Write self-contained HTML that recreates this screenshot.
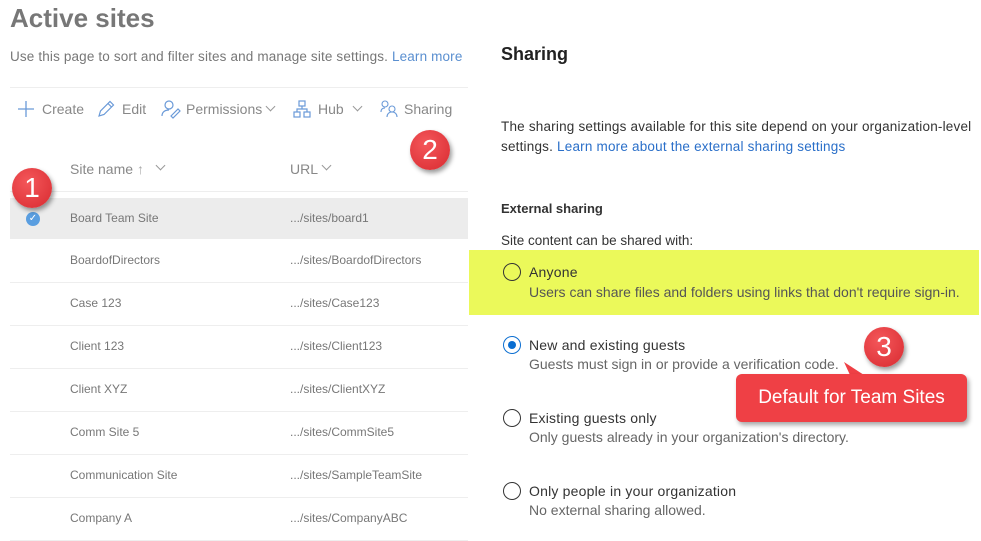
<!DOCTYPE html>
<html><head><meta charset="utf-8"><style>
body{margin:0;width:981px;height:522px;overflow:hidden;background:#fff;font-family:"Liberation Sans",sans-serif;position:relative;color:#333}
.a{position:absolute;white-space:nowrap}
.row{position:absolute;left:10px;width:458px;height:42px;border-bottom:1px solid #eee;font-size:12px;color:#777}
.row span{position:absolute;top:13px}
.badge{position:absolute;width:40px;height:40px;border-radius:50%;color:#fff;font-size:28px;text-align:center;line-height:40px;box-shadow:2px 3px 5px rgba(0,0,0,.4);background:radial-gradient(circle at 40% 35%,#f4575a,#d82a30)}
.radio{position:absolute;width:18px;height:18px;border:1.5px solid #333;border-radius:50%;box-sizing:border-box}
.t1{font-size:14px;color:#333;letter-spacing:.2px}.t2{font-size:14px;color:#666}
.tb{position:absolute;top:101px;font-size:14px;color:#888}
.chev{position:absolute;width:6px;height:6px;border-right:1px solid #999;border-bottom:1px solid #999;transform:rotate(45deg)}
</style></head><body>
<div class="a" style="left:10px;top:3px;font-size:26px;font-weight:bold;color:#777">Active sites</div>
<div class="a" style="left:10px;top:49px;font-size:13.5px;color:#777;letter-spacing:.15px">Use this page to sort and filter sites and manage site settings. <span style="color:#5a8fd0">Learn more</span></div>
<div class="a" style="left:10px;top:87px;width:458px;border-top:1px solid #eee"></div>
<svg class="a" style="left:17px;top:100px" width="18" height="18"><path d="M9 1v16M1 9h16" stroke="#6a9ad8" stroke-width="1.3"/></svg>
<div class="tb" style="left:42px">Create</div>
<svg class="a" style="left:97px;top:100px" width="18" height="18"><path d="M2 16l1.5-5L13 1.5l3.5 3.5L7 14.5z M11 3.5l3.5 3.5" fill="none" stroke="#6a9ad8" stroke-width="1.2"/></svg>
<div class="tb" style="left:122px">Edit</div>
<svg class="a" style="left:161px;top:99px" width="20" height="20"><circle cx="8" cy="6" r="4" fill="none" stroke="#6a9ad8" stroke-width="1.2"/><path d="M1 17c0-4 3-6 7-6M10 17l7-7 2 2-7 7z" fill="none" stroke="#6a9ad8" stroke-width="1.2"/></svg>
<div class="tb" style="left:186px">Permissions</div>
<div class="chev" style="left:267px;top:103px"></div>
<svg class="a" style="left:293px;top:100px" width="18" height="18"><rect x="6" y="1" width="6" height="5" fill="none" stroke="#6a9ad8" stroke-width="1.2"/><rect x="1" y="12" width="6" height="5" fill="none" stroke="#6a9ad8" stroke-width="1.2"/><rect x="11" y="12" width="6" height="5" fill="none" stroke="#6a9ad8" stroke-width="1.2"/><path d="M9 6v3M4 12V9h10v3" fill="none" stroke="#6a9ad8" stroke-width="1.2"/></svg>
<div class="tb" style="left:318px">Hub</div>
<div class="chev" style="left:354px;top:103px"></div>
<svg class="a" style="left:380px;top:100px" width="18" height="18"><circle cx="5" cy="4" r="3" fill="none" stroke="#6a9ad8" stroke-width="1.1"/><circle cx="12" cy="9" r="3" fill="none" stroke="#6a9ad8" stroke-width="1.1"/><path d="M1 12c0-3 2-4 4-4M7 17c0-3 2-5 5-5s5 2 5 5" fill="none" stroke="#6a9ad8" stroke-width="1.1"/></svg>
<div class="tb" style="left:404px">Sharing</div>
<div class="a" style="left:70px;top:161px;font-size:14px;color:#888">Site name <span style="color:#aaa">↑</span></div>
<div class="chev" style="left:157px;top:162px"></div>
<div class="a" style="left:290px;top:161px;font-size:14px;color:#888">URL</div>
<div class="chev" style="left:323px;top:162px"></div>
<div class="a" style="left:10px;top:191px;width:458px;border-top:1px solid #eee"></div>
<div class="row" style="top:198px;background:#ececec;border:none;height:41px"><span style="left:60px">Board Team Site</span><span style="left:280px">.../sites/board1</span>
<div style="position:absolute;left:16px;top:14px;width:14px;height:14px;border-radius:50%;background:#5a9ee0;color:#fff;font-size:10px;text-align:center;line-height:14px">✓</div></div>
<div class="row" style="top:240px"><span style="left:60px">BoardofDirectors</span><span style="left:280px">.../sites/BoardofDirectors</span></div>
<div class="row" style="top:283px"><span style="left:60px">Case 123</span><span style="left:280px">.../sites/Case123</span></div>
<div class="row" style="top:326px"><span style="left:60px">Client 123</span><span style="left:280px">.../sites/Client123</span></div>
<div class="row" style="top:369px"><span style="left:60px">Client XYZ</span><span style="left:280px">.../sites/ClientXYZ</span></div>
<div class="row" style="top:412px"><span style="left:60px">Comm Site 5</span><span style="left:280px">.../sites/CommSite5</span></div>
<div class="row" style="top:455px"><span style="left:60px">Communication Site</span><span style="left:280px">.../sites/SampleTeamSite</span></div>
<div class="row" style="top:498px"><span style="left:60px">Company A</span><span style="left:280px">.../sites/CompanyABC</span></div>
<div class="badge" style="left:12px;top:168px">1</div>
<div class="badge" style="left:410px;top:130px">2</div>

<div class="a" style="left:501px;top:44px;font-size:18px;font-weight:bold;color:#222">Sharing</div>
<div class="a" style="left:501px;top:117px;font-size:13.5px;color:#333;line-height:20px;letter-spacing:.2px">The sharing settings available for this site depend on your organization-level<br>settings. <span style="color:#2a6fc9">Learn more about the external sharing settings</span></div>
<div class="a" style="left:501px;top:201px;font-size:13px;font-weight:bold;color:#333">External sharing</div>
<div class="a" style="left:501px;top:233px;font-size:13.5px;color:#333">Site content can be shared with:</div>
<div class="a" style="left:469px;top:250px;width:510px;height:65px;background:#ebf95a"></div>
<div class="radio" style="left:503px;top:263px"></div>
<div class="a t1" style="left:529px;top:264px">Anyone</div>
<div class="a t2" style="left:529px;top:284px;color:#555">Users can share files and folders using links that don't require sign-in.</div>
<div class="radio" style="left:503px;top:336px;border-color:#0a6ed1"><div style="position:absolute;left:3.5px;top:3.5px;width:8px;height:8px;border-radius:50%;background:#0a6ed1"></div></div>
<div class="a t1" style="left:529px;top:337px">New and existing guests</div>
<div class="a t2" style="left:529px;top:356px">Guests must sign in or provide a verification code.</div>
<div class="radio" style="left:503px;top:409px"></div>
<div class="a t1" style="left:529px;top:410px">Existing guests only</div>
<div class="a t2" style="left:529px;top:429px">Only guests already in your organization's directory.</div>
<div class="radio" style="left:503px;top:482px"></div>
<div class="a t1" style="left:529px;top:483px">Only people in your organization</div>
<div class="a t2" style="left:529px;top:502px">No external sharing allowed.</div>
<svg class="a" style="left:836px;top:362px" width="30" height="20"><polygon points="8,0 14,13 28,13" fill="#ef4045"/></svg>
<div class="a" style="left:736px;top:374px;width:231px;height:48px;background:#ef4045;border-radius:6px;box-shadow:2px 3px 5px rgba(0,0,0,.35);color:#fff;font-size:19px;text-align:center;line-height:48px">Default for Team Sites</div>
<div class="badge" style="left:864px;top:327px">3</div>
</body></html>
